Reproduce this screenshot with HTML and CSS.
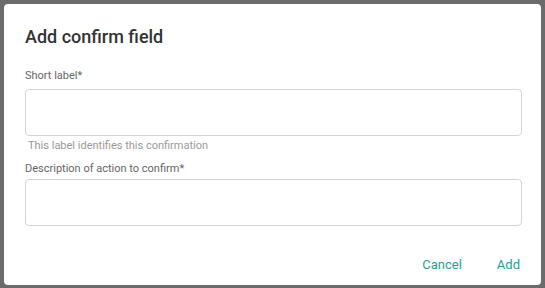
FILE: index.html
```html
<!DOCTYPE html>
<html>
<head>
<meta charset="utf-8">
<link rel="stylesheet" href="styles.css">
</head>
<body>
<div class="dialog">
  <h1 class="title">Add confirm field</h1>
  <div class="field">
    <label class="label">Short label*</label>
    <div class="input"></div>
    <div class="hint">This label identifies this confirmation</div>
  </div>
  <div class="field second">
    <label class="label">Description of action to confirm*</label>
    <div class="input"></div>
  </div>
  <div class="actions">
    <button class="btn">Cancel</button>
    <button class="btn">Add</button>
  </div>
</div>
</body>
</html>
```

FILE: styles.css
```css
html, body {
  margin: 0;
  padding: 0;
  background: #6b6b6b;
  width: 545px;
  height: 288px;
  overflow: hidden;
  font-family: Roboto, "Liberation Sans", sans-serif;
}
body {
  padding: 4px 4px 0 4px;
  box-sizing: border-box;
}
.dialog {
  background: #fff;
  width: 537px;
  height: 281px;
  border-radius: 4px;
  box-sizing: border-box;
  padding: 22px 19px 0 21px;
}
.title {
  margin: 0;
  font-size: 18px;
  font-weight: 500;
  color: #333;
  line-height: 22px;
}
.field {
  margin-top: 21px;
}
.field.second {
  margin-top: 9px;
}
.label {
  display: block;
  font-size: 11px;
  color: #666;
  line-height: 14px;
  margin-bottom: 6px;
}
.second .label {
  margin-bottom: 3px;
}
.input {
  height: 45px;
  border: 1px solid #d4d4d4;
  border-radius: 4px;
}
.hint {
  font-size: 11px;
  color: #999;
  line-height: 14px;
  margin-top: 3px;
  padding-left: 3px;
}
.actions {
  display: flex;
  justify-content: flex-end;
  gap: 35px;
  margin-top: 31px;
  padding-right: 2px;
}
.btn {
  border: none;
  background: none;
  padding: 0;
  font-family: Roboto, "Liberation Sans", sans-serif;
  font-size: 13px;
  color: #1aa394;
  line-height: 16px;
}
```
